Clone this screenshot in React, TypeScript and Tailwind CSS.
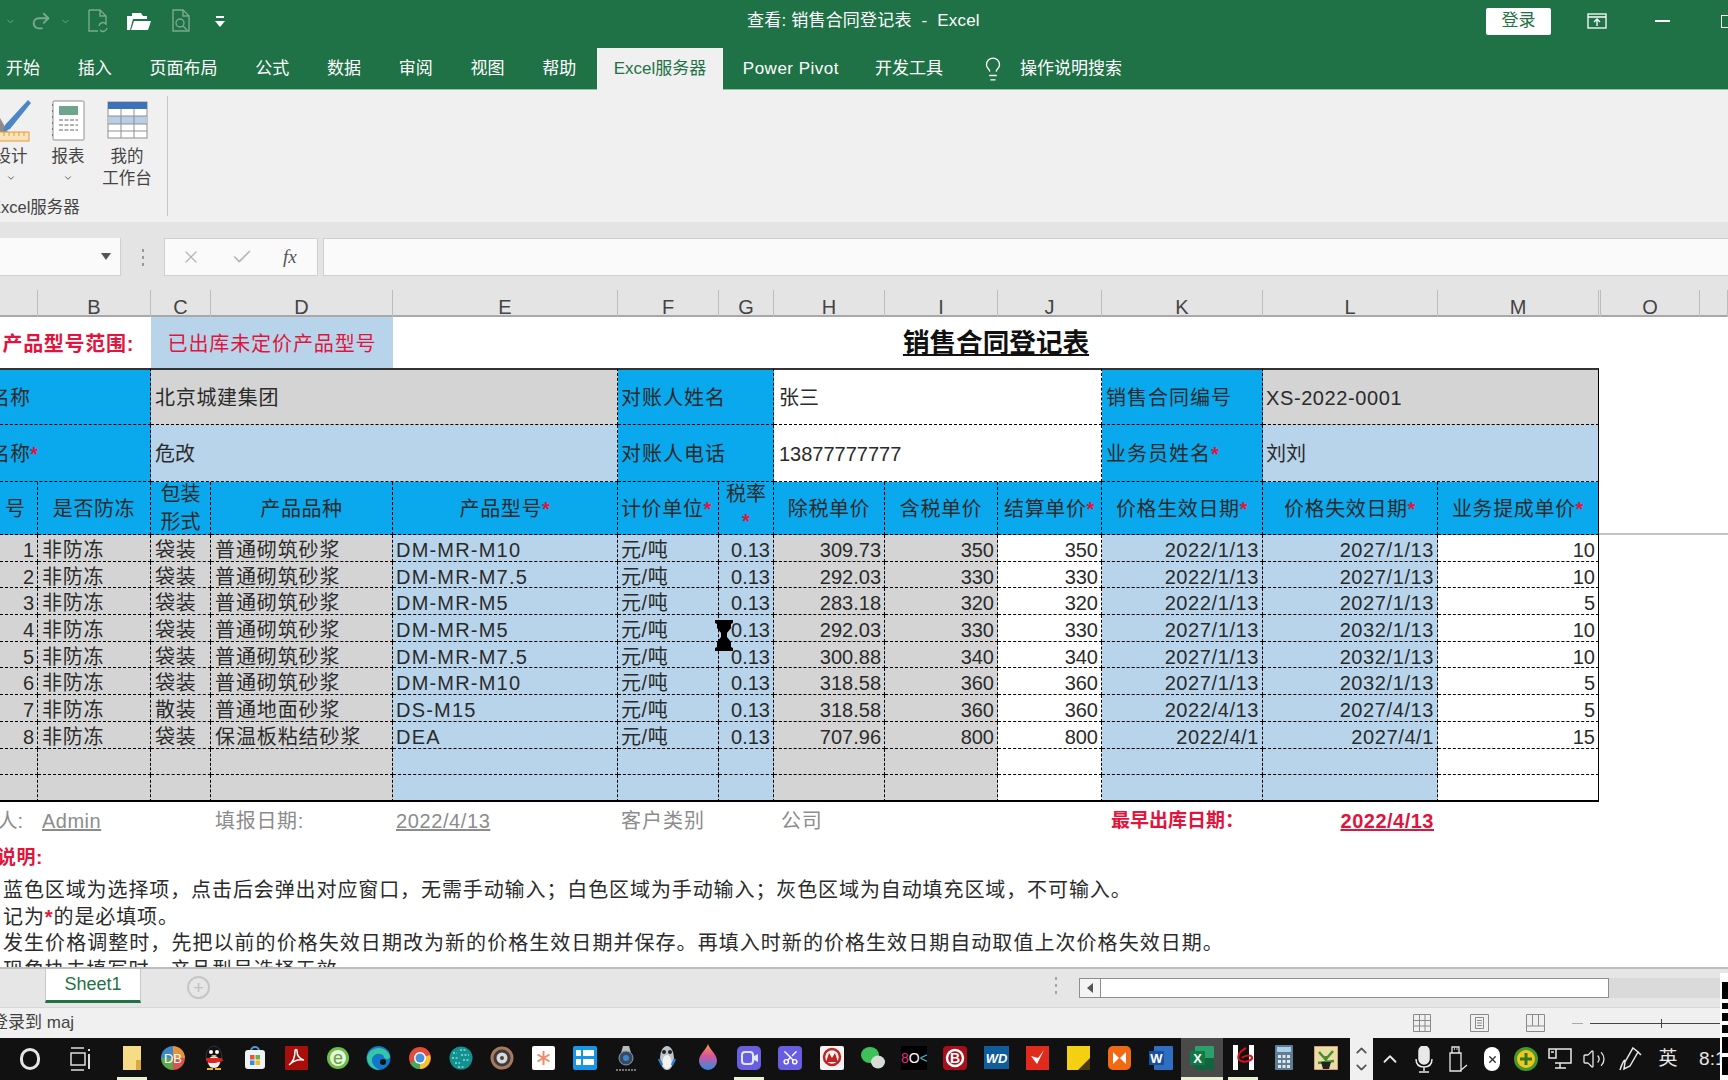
import React from 'react';
import { Lightbulb, Redo2, Scissors, Volume2, ChevronUp, ChevronDown, X, Check } from 'lucide-react';

const COLS = "grid-cols-[38px_113px_60px_182px_225px_101px_55px_111px_113px_104px_161px_175px_161px_2px_99px_28px]";
const LINE = "border-r border-b border-dashed border-[#000]";
const BRIGHT = "bg-[#0aa8ec]";
const LIGHT = "bg-[#b8d4ea]";
const GRAY = "bg-[#d4d4d4]";
const SOLID_R = "[border-right-style:solid]!";

const Star = () => <span className="text-[#e0143c] font-bold">*</span>;

const tabs = ['开始', '插入', '页面布局', '公式', '数据', '审阅', '视图', '帮助'];
const letters = ['', 'B', 'C', 'D', 'E', 'F', 'G', 'H', 'I', 'J', 'K', 'L', 'M', '', 'O', ''];

const rows = [
  ['1', '袋装', '普通砌筑砂浆', 'DM-MR-M10', '309.73', '350', '350', '2022/1/13', '2027/1/13', '10'],
  ['2', '袋装', '普通砌筑砂浆', 'DM-MR-M7.5', '292.03', '330', '330', '2022/1/13', '2027/1/13', '10'],
  ['3', '袋装', '普通砌筑砂浆', 'DM-MR-M5', '283.18', '320', '320', '2022/1/13', '2027/1/13', '5'],
  ['4', '袋装', '普通砌筑砂浆', 'DM-MR-M5', '292.03', '330', '330', '2027/1/13', '2032/1/13', '10'],
  ['5', '袋装', '普通砌筑砂浆', 'DM-MR-M7.5', '300.88', '340', '340', '2027/1/13', '2032/1/13', '10'],
  ['6', '袋装', '普通砌筑砂浆', 'DM-MR-M10', '318.58', '360', '360', '2027/1/13', '2032/1/13', '5'],
  ['7', '散装', '普通地面砂浆', 'DS-M15', '318.58', '360', '360', '2022/4/13', '2027/4/13', '5'],
  ['8', '袋装', '保温板粘结砂浆', 'DEA', '707.96', '800', '800', '2022/4/1', '2027/4/1', '15'],
  ['', '', '', '', '', '', '', '', '', ''],
  ['', '', '', '', '', '', '', '', '', ''],
];

function Cell({ className = '', children }: { className?: string; children?: React.ReactNode }) {
  return (
    <div className={`flex items-center overflow-hidden whitespace-nowrap ${LINE} ${className}`}>
      {children}
    </div>
  );
}

function DataRow({ row, last }: { row: string[]; last: boolean }) {
  const end = last ? 'border-b-2 [border-bottom-style:solid]!' : '';
  const unit = row[3] ? '元/吨' : '';
  const rate = row[3] ? '0.13' : '';
  const frost = row[3] ? '非防冻' : '';
  const num = `justify-end pr-[3px] pt-[4px]`;
  const txt = `pl-[4px] pt-[4px]`;
  return (
    <>
      <Cell className={`${GRAY} ${num} ${end}`}>{row[0]}</Cell>
      <Cell className={`${GRAY} ${txt} tracking-[0.7px] ${end}`}>{frost}</Cell>
      <Cell className={`${GRAY} ${txt} tracking-[0.7px] ${end}`}>{row[1]}</Cell>
      <Cell className={`${GRAY} ${txt} tracking-[0.9px] ${end}`}>{row[2]}</Cell>
      <Cell className={`${LIGHT} pl-[3px] pt-[4px] tracking-[1.2px] ${end}`}>{row[3]}</Cell>
      <Cell className={`${LIGHT} pl-[3px] pt-[4px] tracking-[0.6px] ${end}`}>{unit}</Cell>
      <Cell className={`${LIGHT} ${num} ${end}`}>{rate}</Cell>
      <Cell className={`${GRAY} ${num} ${end}`}>{row[4]}</Cell>
      <Cell className={`${GRAY} ${num} ${end}`}>{row[5]}</Cell>
      <Cell className={`bg-white ${num} ${end}`}>{row[6]}</Cell>
      <Cell className={`${LIGHT} ${num} tracking-[0.6px] ${end}`}>{row[7]}</Cell>
      <Cell className={`${LIGHT} ${num} tracking-[0.6px] ${end}`}>{row[8]}</Cell>
      <Cell className={`bg-white ${num} ${SOLID_R} ${end}`}>{row[9]}</Cell>
      <div className="col-span-3" />
    </>
  );
}

function TitleBar() {
  return (
    <div className="flex h-[48px] items-center pb-[6px] bg-[#1f7246] text-white shrink-0">
      <div className="flex w-[747px] items-center shrink-0">
        <ChevronDown size={11} className="ml-[5px] opacity-40" />
        <Redo2 size={22} className="ml-[14px] opacity-40" />
        <ChevronDown size={11} className="ml-[8px] opacity-40" />
        <svg width="22" height="24" viewBox="0 0 22 24" fill="none" stroke="#fff" strokeWidth="1.4" className="ml-[16px] opacity-40">
          <path d="M2 1h11l6 6v9M2 1v21h9M13 1v6h6" />
          <path d="M12 17a4 4 0 0 1 7-2M20 19a4 4 0 0 1-7 2" />
        </svg>
        <svg width="26" height="20" viewBox="0 0 26 20" fill="#fff" className="ml-[17px]">
          <path d="M1 19V5h5V2h9l2 3h4v3H7L4 19zM8 10h17l-3 9H5z" />
        </svg>
        <svg width="20" height="24" viewBox="0 0 20 24" fill="none" stroke="#fff" strokeWidth="1.4" className="ml-[19px] opacity-40">
          <path d="M2 1h10l6 6v15H2zM12 1v6h6" />
          <circle cx="9" cy="14" r="4" />
          <path d="M12 17l4 4" />
        </svg>
        <svg width="10" height="11" viewBox="0 0 10 11" fill="#fff" className="ml-[24px]">
          <rect x="1" y="0" width="8" height="2" />
          <path d="M0 5h10l-5 6z" />
        </svg>
      </div>
      <div className="w-[739px] shrink-0 text-[17px] tracking-[0.2px] whitespace-pre">查看: 销售合同登记表  -  Excel</div>
      <div className="w-[65px] h-[27px] shrink-0 bg-white rounded-[2px] flex items-center justify-center text-[#1f7246] text-[17px]">登录</div>
      <svg width="20" height="16" viewBox="0 0 20 16" fill="none" stroke="#fff" strokeWidth="1.3" className="ml-[36px] shrink-0">
        <rect x="1" y="1" width="18" height="14" />
        <path d="M1 4h18M10 13V7M7 9l3-3 3 3" />
      </svg>
      <div className="ml-[48px] w-[15px] h-[2px] bg-white shrink-0" />
      <div className="ml-[51px] w-[14px] h-[13px] border border-white shrink-0" />
    </div>
  );
}

function TabsRow() {
  return (
    <div className="flex h-[42px] -ml-[13px] items-stretch bg-[#1f7246] text-white text-[17px] border-b border-[#8fc4a4] shrink-0">
      {tabs.map((t) => (
        <div key={t} className="flex items-center px-[18.9px]">{t}</div>
      ))}
      <div className="flex items-center px-[16.5px] ml-[2px] -mb-px bg-[#f0f0f0] text-[#1f7246]">Excel服务器</div>
      <div className="flex items-center px-[18px] ml-[2px] tracking-[0.5px]">Power Pivot</div>
      <div className="flex items-center px-[18px]">开发工具</div>
      <div className="flex items-center ml-[19px]">
        <Lightbulb size={26} strokeWidth={1.2} />
        <span className="ml-[14px]">操作说明搜索</span>
      </div>
    </div>
  );
}

function Ribbon() {
  return (
    <div className="flex h-[132px] bg-[#f0f0f0] text-[#444] text-[16.5px] leading-[22px] shrink-0">
      <div className="flex flex-col w-[167px] pt-[10px]">
        <div className="flex h-[89px]">
          <div className="flex flex-col items-center w-[42px] -ml-[10px] shrink-0">
            <svg width="42" height="45" viewBox="0 0 42 45">
              <path d="M10 18l8 14H2z" fill="#8c8c8c" />
              <path d="M38 0l3 3-21 26-7 3 2-7z" fill="#4c86c6" />
              <rect x="2" y="32" width="37" height="9" fill="#fbe3b8" stroke="#e29b3c" />
              <path d="M9 32v4M14 32v4M19 32v4M24 32v4M29 32v4M34 32v4" stroke="#e29b3c" />
            </svg>
            <span>设计</span>
            <div className="flex items-center h-[22px]"><ChevronDown size={10} /></div>
          </div>
          <div className="flex flex-col items-center w-[36px] ml-[18px] shrink-0">
            <svg width="34" height="45" viewBox="0 0 34 45">
              <rect x="2" y="1" width="31" height="39" rx="1" fill="#fff" stroke="#8f8f8f" />
              <path d="M2 5h-1M2 11h-1M2 17h-1M2 23h-1M2 29h-1M2 35h-1" stroke="#777" strokeWidth="2" />
              <rect x="8" y="6" width="19" height="9" fill="#6fa58b" />
              <path d="M8 20h19M8 25h19M8 30h19" stroke="#999" strokeWidth="1.4" strokeDasharray="4 1.5" />
            </svg>
            <span>报表</span>
            <div className="flex items-center h-[22px]"><ChevronDown size={10} /></div>
          </div>
          <div className="flex flex-col items-center w-[50px] ml-[16px] shrink-0">
            <svg width="41" height="45" viewBox="0 0 41 45">
              <rect x="1" y="2" width="39" height="36" fill="#fff" stroke="#8f8f8f" />
              <rect x="1" y="2" width="39" height="7" fill="#3f72b5" />
              <rect x="2" y="16" width="37" height="8" fill="#b9cde6" />
              <path d="M1 16h39M1 24h39M1 31h39M14 9v29M27 9v29" stroke="#8f8f8f" />
            </svg>
            <span>我的</span>
            <span>工作台</span>
          </div>
        </div>
        <div className="-ml-[10px] mt-[7px] whitespace-nowrap">Excel服务器</div>
      </div>
      <div className="w-px h-[120px] mt-[6px] bg-[#c6c6c6]" />
    </div>
  );
}

function FormulaBar() {
  return (
    <div className="flex h-[54px] pt-[16px] bg-[#e4e4e4] shrink-0">
      <div className="flex items-center justify-end w-[121px] pr-[9px] bg-[#fafafa] border-r border-b border-[#d0d0d0]">
        <svg width="10" height="7" viewBox="0 0 10 7" fill="#555"><path d="M0 0h10L5 7z" /></svg>
      </div>
      <div className="flex flex-col items-center justify-center gap-[4px] w-[43px]">
        <div className="w-[2px] h-[3px] bg-[#999]" />
        <div className="w-[2px] h-[3px] bg-[#999]" />
        <div className="w-[2px] h-[3px] bg-[#999]" />
      </div>
      <div className="flex items-center w-[154px] bg-[#fafafa] border border-[#d0d0d0] text-[#555]">
        <X size={20} strokeWidth={1.6} className="ml-[16px] text-[#b5b5b5]" />
        <Check size={22} strokeWidth={1.8} className="ml-[30px] text-[#b5b5b5]" />
        <span className="ml-[30px] text-[19px] italic font-['Liberation_Serif',serif]">fx</span>
      </div>
      <div className="flex-1 ml-[5px] bg-[#fafafa] border-t border-b border-l border-[#cfcfcf]" />
    </div>
  );
}

function ColumnHeader() {
  return (
    <div className={`grid ${COLS} h-[41px] pt-[14px] bg-[#e4e4e4] border-b-2 border-[#a8a8a8] text-[20px] text-[#444] shrink-0`}>
      {letters.map((l, i) => (
        <div key={i} className="flex items-center justify-center pt-[2px] border-r border-[#bdbdbd]">{l}</div>
      ))}
    </div>
  );
}

function Sheet() {
  const solidTop = "border-t-2 border-t-[#333] [border-top-style:solid]!";
  return (
    <div className="relative h-[650px] overflow-hidden bg-white text-[20px] text-[#2b2b2b] shrink-0">
      <div className={`grid ${COLS} grid-rows-[51px_57px_57px_53px_repeat(10,26.7px)_38px]`}>
        {/* title row */}
        <div className="col-span-2 flex items-center justify-end pr-[17px] pt-[2px] text-[#e0143c] font-bold tracking-[0.7px] whitespace-nowrap overflow-hidden">产品型号范围:</div>
        <div className={`col-span-2 flex items-center justify-center pt-[2px] ${LIGHT} text-[#e0143c] tracking-[0.9px] whitespace-nowrap`}>已出库未定价产品型号</div>
        <div className="col-span-9 flex items-center justify-center text-[26.6px] font-bold underline text-[#111] pt-[3px]">销售合同登记表</div>
        <div className="col-span-3" />

        {/* customer rows */}
        <Cell className={`col-span-2 pt-[2px] ${BRIGHT} ${solidTop} -indent-[10px]`}>名称</Cell>
        <Cell className={`col-span-3 pt-[2px] ${GRAY} ${solidTop} pl-[4px] tracking-[0.7px]`}>北京城建集团</Cell>
        <Cell className={`col-span-2 pt-[2px] ${BRIGHT} ${solidTop} pl-[3px] tracking-[1px]`}>对账人姓名</Cell>
        <Cell className={`col-span-3 pt-[2px] bg-white ${solidTop} pl-[5px]`}>张三</Cell>
        <Cell className={`pt-[2px] ${BRIGHT} ${solidTop} pl-[4px] tracking-[1px]`}>销售合同编号</Cell>
        <Cell className={`col-span-2 pt-[2px] ${GRAY} ${solidTop} pl-[3px] tracking-[0.6px] ${SOLID_R}`}>XS-2022-0001</Cell>
        <div className="col-span-3" />

        <Cell className={`col-span-2 pt-[2px] ${BRIGHT} -indent-[10px]`}><span>名称<Star /></span></Cell>
        <Cell className={`col-span-3 pt-[2px] ${LIGHT} pl-[4px]`}>危改</Cell>
        <Cell className={`col-span-2 pt-[2px] ${BRIGHT} pl-[3px] tracking-[1px]`}>对账人电话</Cell>
        <Cell className="col-span-3 pt-[2px] bg-white pl-[5px]">13877777777</Cell>
        <Cell className={`pt-[2px] ${BRIGHT} pl-[4px] tracking-[1px]`}><span>业务员姓名<Star /></span></Cell>
        <Cell className={`col-span-2 pt-[2px] ${LIGHT} pl-[3px] ${SOLID_R}`}>刘刘</Cell>
        <div className="col-span-3" />

        {/* header row */}
        <Cell className={`${BRIGHT} justify-end pr-[12px] pt-[2px]`}>号</Cell>
        <Cell className={`${BRIGHT} justify-center pt-[2px] tracking-[0.6px]`}>是否防冻</Cell>
        <Cell className={`${BRIGHT} justify-center text-center leading-[28px] whitespace-normal!`}>包装<br />形式</Cell>
        <Cell className={`${BRIGHT} justify-center pt-[2px] tracking-[0.6px]`}>产品品种</Cell>
        <Cell className={`${BRIGHT} justify-center pt-[2px] tracking-[0.6px]`}><span>产品型号<Star /></span></Cell>
        <Cell className={`${BRIGHT} pl-[3px] pt-[2px] tracking-[0.6px]`}><span>计价单位<Star /></span></Cell>
        <Cell className={`${BRIGHT} justify-center text-center leading-[27px] whitespace-normal!`}><span>税率<br /><Star /></span></Cell>
        <Cell className={`${BRIGHT} justify-center pt-[2px] tracking-[0.6px]`}>除税单价</Cell>
        <Cell className={`${BRIGHT} justify-center pt-[2px] tracking-[0.6px]`}>含税单价</Cell>
        <Cell className={`${BRIGHT} justify-center pt-[2px] tracking-[0.6px]`}><span>结算单价<Star /></span></Cell>
        <Cell className={`${BRIGHT} justify-center pt-[2px] tracking-[0.6px]`}><span>价格生效日期<Star /></span></Cell>
        <Cell className={`${BRIGHT} justify-center pt-[2px] tracking-[0.6px]`}><span>价格失效日期<Star /></span></Cell>
        <Cell className={`${BRIGHT} justify-center pt-[2px] tracking-[0.6px] ${SOLID_R}`}><span>业务提成单价<Star /></span></Cell>
        <div className="col-span-3 border-b-2 border-[#c4c4c4]" />

        {rows.map((r, i) => (
          <DataRow key={i} row={r} last={i === rows.length - 1} />
        ))}

        {/* info row */}
        <div className="flex items-center justify-end text-[#8c8c8c] whitespace-nowrap pr-[15px]">人:</div>
        <div className="flex items-center pl-[4px] text-[#8c8c8c] underline tracking-[0.5px]">Admin</div>
        <div />
        <div className="flex items-center pl-[4px] text-[#8c8c8c] tracking-[0.7px]">填报日期:</div>
        <div className="flex items-center pl-[3px] text-[#8c8c8c] underline tracking-[0.6px]">2022/4/13</div>
        <div className="flex items-center pl-[3px] text-[#8c8c8c] tracking-[1px] whitespace-nowrap">客户类别</div>
        <div />
        <div className="col-span-3 flex items-center pl-[7px] text-[#8c8c8c] tracking-[0.7px]">公司</div>
        <div className="flex items-center pl-[9px] text-[#e0143c] font-bold text-[19px] whitespace-nowrap">最早出库日期：</div>
        <div className="flex items-center justify-end pr-[4px] text-[#e0143c] font-bold underline tracking-[0.5px]">2022/4/13</div>
        <div className="col-span-4" />
      </div>

      <div className="flex h-[37px] items-center -ml-[3px] text-[#e0143c] font-bold text-[19px] tracking-[0.5px]">说明:</div>
      <div className="pl-[3px] tracking-[0.9px] leading-[26.7px] whitespace-nowrap">
        <div>蓝色区域为选择项，点击后会弹出对应窗口，无需手动输入；白色区域为手动输入；灰色区域为自动填充区域，不可输入。</div>
        <div>记为<Star />的是必填项。</div>
        <div className="tracking-[1.05px]">发生价格调整时，先把以前的价格失效日期改为新的价格生效日期并保存。再填入时新的价格生效日期自动取值上次价格失效日期。</div>
        <div>现角协未填写时，产品型号选择无效。</div>
      </div>

      {/* busy cursor over cell G */}
      <svg width="18" height="31" viewBox="0 0 18 31" className="absolute left-[715px] top-[303px]">
        <path d="M0 0h18v3l-2 1v4l-4 5v4l4 5v5l2 1v3H0v-3l2-1v-5l4-5v-4L2 8V4L0 3z" fill="#000" />
      </svg>
    </div>
  );
}

function SheetTabs() {
  return (
    <div className="flex h-[40px] items-start bg-[#e6e6e6] border-t-2 border-[#bdbdbd] shrink-0">
      <div className="flex items-center justify-center ml-[45px] w-[96px] h-[34px] bg-white border-x border-[#c8c8c8] border-b-[3px] border-b-[#1f7246] text-[#1f7246] text-[18px]">Sheet1</div>
      <div className="flex items-center justify-center ml-[46px] mt-[7px] w-[23px] h-[23px] rounded-full border-2 border-[#c6c6c6] text-[#c0c0c0] text-[18px] leading-none">+</div>
      <div className="ml-[845px] mt-[8px] flex flex-col gap-[4px]">
        <div className="w-[2px] h-[3px] bg-[#a5a5a5]" />
        <div className="w-[2px] h-[3px] bg-[#a5a5a5]" />
        <div className="w-[2px] h-[3px] bg-[#a5a5a5]" />
      </div>
      <div className="flex ml-[22px] mt-[9px] h-[20px] w-[530px] bg-white border border-[#8f8f8f]">
        <div className="flex items-center justify-center w-[21px] border-r border-[#8f8f8f] bg-[#f4f4f4]">
          <svg width="6" height="10" viewBox="0 0 6 10" fill="#555"><path d="M6 0v10L0 5z" /></svg>
        </div>
      </div>
      <div className="flex-1 mt-[9px] h-[20px] bg-[#dadada]" />
    </div>
  );
}

function StatusBar() {
  return (
    <div className="flex h-[31px] items-center bg-[#f0f0f0] border-t border-[#d6d6d6] text-[#444] text-[17px] shrink-0">
      <div className="-ml-[9px] w-[1422px] whitespace-nowrap">登录到 maj</div>
      <svg width="18" height="18" viewBox="0 0 18 18" fill="none" stroke="#8a8a8a"><path d="M.5.5h17v17H.5zM6.5.5v17M12 .5v17M.5 6.5h17M.5 12h17" /></svg>
      <svg width="19" height="18" viewBox="0 0 19 18" fill="none" stroke="#8a8a8a" className="ml-[39px]"><path d="M.5.5h18v17H.5zM5.5 3.5h8v11h-8zM7 6.500h5M7 9h5M7 11.500h5" /></svg>
      <svg width="19" height="18" viewBox="0 0 19 18" fill="none" stroke="#8a8a8a" className="ml-[37px]"><path d="M.5.5h18v17H.5zM.5 12h18M6.500.5V12M12.500.5V12" /></svg>
      <div className="ml-[27px] w-[11px] h-px bg-[#a8a8a8]" />
      <div className="relative ml-[7px] flex-1 h-px bg-[#444]">
        <div className="absolute left-[71px] -top-[4px] w-px h-[9px] bg-[#444]" />
      </div>
    </div>
  );
}

type TaskIcon = { svg: React.ReactNode; strip?: boolean; active?: boolean };

const taskIcons: TaskIcon[] = [
  { strip: true, svg: <svg width="20" height="24" viewBox="0 0 20 24"><rect x="1" y="0" width="18" height="24" fill="#f6dc85" /><rect x="14" y="14" width="5" height="10" fill="#d9a93f" /></svg> },
  { svg: <svg width="24" height="26" viewBox="0 0 24 26"><path d="M12 13V1a12 12 0 0 1 12 12z" fill="#e8913a" /><path d="M12 13h12a12 12 0 0 1-12 12z" fill="#d9534f" /><path d="M12 13v12A12 12 0 0 1 0 13z" fill="#5ba84a" /><path d="M12 13H0A12 12 0 0 1 12 1z" fill="#3f86c9" /><text x="12" y="18" textAnchor="middle" fontSize="13" fill="#fff" fontFamily="Liberation Sans">DB</text></svg> },
  { svg: <svg width="22" height="26" viewBox="0 0 22 26"><ellipse cx="11" cy="12" rx="8" ry="11" fill="#111" stroke="#333" /><ellipse cx="11" cy="17" rx="6" ry="6" fill="#eee" /><circle cx="8" cy="7" r="2" fill="#fff" /><circle cx="14" cy="7" r="2" fill="#fff" /><path d="M8 10h6l-3 2z" fill="#f0b323" /><path d="M3 13h16l1 3-8 2H6l-3-3z" fill="#d22" /><path d="M4 23h6v2H4zM12 23h6v2h-6z" fill="#f0b323" /></svg> },
  { svg: <svg width="22" height="25" viewBox="0 0 22 25"><path d="M7 6a4 4 0 0 1 8 0" fill="none" stroke="#4c9bd6" strokeWidth="2" /><rect x="1" y="5" width="20" height="19" rx="3" fill="#eef3f6" /><rect x="6" y="10" width="4.500" height="4.500" fill="#e8553a" /><rect x="11.500" y="10" width="4.500" height="4.500" fill="#6cb33f" /><rect x="6" y="15.500" width="4.500" height="4.500" fill="#2f8fdc" /><rect x="11.500" y="15.500" width="4.500" height="4.500" fill="#f5b921" /></svg> },
  { svg: <svg width="23" height="24" viewBox="0 0 23 24"><rect width="23" height="24" rx="1" fill="#a80f0a" /><path d="M4 19c4-3 6-9 6-14 0-2 2-2 2 0 0 5 3 8 7 9-5-1-11 1-15 5z" fill="none" stroke="#fff" strokeWidth="1.500" /></svg> },
  { svg: <svg width="22" height="26" viewBox="0 0 22 26"><circle cx="11" cy="13" r="11" fill="#6cbe45" /><circle cx="11" cy="13" r="8" fill="#e9f5de" /><text x="11" y="19" textAnchor="middle" fontSize="18" fill="#5aa838" fontFamily="Liberation Sans">e</text></svg> },
  { svg: <svg width="25" height="26" viewBox="0 0 25 26"><circle cx="12.500" cy="13" r="12" fill="#0f78c9" /><path d="M1 12A12 12 0 0 1 24 11c0 4-5 4-6 1-1-4-10-5-12 2-1 5 4 9 8 11C7 25 1 20 1 12z" fill="#37c5a6" /><circle cx="17" cy="17" r="3" fill="#111" /></svg> },
  { svg: <svg width="24" height="26" viewBox="0 0 24 26"><circle cx="12" cy="13" r="11" fill="#e04b3a" /><path d="M12 13L2 18a11 11 0 0 0 10 6z" fill="#4aa85a" /><path d="M12 13v11a11 11 0 0 0 10-14z" fill="#f4c430" /><circle cx="12" cy="13" r="6" fill="#fff" /><circle cx="12" cy="13" r="4.500" fill="#4a8fdc" /></svg> },
  { svg: <svg width="24" height="26" viewBox="0 0 24 26"><circle cx="12" cy="13" r="11.500" fill="#14908f" /><path d="M4 8h4M11 5h6M3 13h6M12 10h8M6 18h5M14 15h6M9 22h7" stroke="#7ee3dc" strokeWidth="1.500" strokeDasharray="2 1.500" /></svg> },
  { svg: <svg width="24" height="26" viewBox="0 0 24 26"><circle cx="12" cy="13" r="10" fill="#3b3b3b" stroke="#a8795f" strokeWidth="3" /><circle cx="12" cy="13" r="5.500" fill="#d9d9d9" /><circle cx="12" cy="13" r="2" fill="#444" /></svg> },
  { svg: <svg width="23" height="26" viewBox="0 0 23 26"><rect y="1" width="23" height="24" rx="2" fill="#fff" /><path d="M11.500 6v14M5.500 9.500l12 7M17.500 9.500l-12 7" stroke="#f08a6c" strokeWidth="2" /></svg> },
  { svg: <svg width="24" height="26" viewBox="0 0 24 26"><rect y="1" width="24" height="24" rx="2" fill="#1596e8" /><rect x="3" y="5" width="5" height="6" fill="#fff" /><rect x="3" y="14" width="5" height="6" fill="#fff" /><rect x="10" y="5" width="11" height="6" fill="#fff" /><rect x="10" y="14" width="11" height="6" fill="#fff" /></svg> },
  { svg: <svg width="24" height="26" viewBox="0 0 24 26"><path d="M9 1h6l2 7H7z" fill="#bbb" /><circle cx="12" cy="13" r="7" fill="#334b66" stroke="#999" /><circle cx="12" cy="13" r="3" fill="#3f86c9" /><path d="M2 25h20" stroke="#777" strokeWidth="2" strokeDasharray="2 1" /></svg> },
  { svg: <svg width="22" height="26" viewBox="0 0 22 26"><ellipse cx="11" cy="13" rx="7" ry="12" fill="#bcc4cc" /><ellipse cx="11" cy="17" rx="4.500" ry="7" fill="#f1f1f1" /><circle cx="8" cy="7" r="2" fill="#222" /><circle cx="14" cy="7" r="2" fill="#222" /><path d="M3 14l3 6M19 14l-3 6" stroke="#2f7fc8" strokeWidth="2.500" /></svg> },
  { svg: <svg width="20" height="27" viewBox="0 0 20 27"><defs><linearGradient id="dropG" x1="0" y1="0" x2="0" y2="1"><stop offset="0" stopColor="#f2a03d" /><stop offset="0.45" stopColor="#d9549e" /><stop offset="1" stopColor="#2f8de0" /></linearGradient></defs><path d="M10 0c2 6 9 10 9 17a9 9 0 0 1-18 0C1 10 8 6 10 0z" fill="url(#dropG)" /></svg> },
  { strip: true, svg: <svg width="24" height="26" viewBox="0 0 24 26"><rect y="1" width="24" height="24" rx="5" fill="#6a5ee0" /><rect x="5" y="7" width="11" height="12" rx="3" fill="none" stroke="#dfe6ff" strokeWidth="2" /><path d="M17 11l4-2v8l-4-2z" fill="#dfe6ff" /></svg> },
  { svg: <div className="flex items-center justify-center w-[24px] h-[24px] rounded-[4px] bg-[#6a5ee0] text-white"><Scissors size={17} className="-rotate-90" /></div> },
  { svg: <svg width="24" height="26" viewBox="0 0 24 26"><rect y="1" width="24" height="24" rx="2" fill="#f3f3f3" /><circle cx="12" cy="12" r="8" fill="none" stroke="#c22424" strokeWidth="2.500" /><path d="M6 17l3-9 3 5 3-5 3 9z" fill="#c22424" /></svg> },
  { svg: <svg width="26" height="26" viewBox="0 0 26 26"><ellipse cx="10" cy="10" rx="9" ry="8" fill="#3fc15a" /><ellipse cx="18" cy="17" rx="7" ry="6.500" fill="#d6dcd6" /></svg> },
  { svg: <div className="flex items-center w-[26px] h-[24px] text-[14px] leading-none bg-black overflow-hidden"><span className="text-[#e0337a]">8</span><span className="text-white">O</span><span className="text-[#3fb6d6]">&lt;</span></div> },
  { svg: <svg width="24" height="26" viewBox="0 0 24 26"><rect y="1" width="24" height="24" rx="4" fill="#a80f1a" /><circle cx="12" cy="13" r="8" fill="none" stroke="#fff" strokeWidth="2.500" /><text x="12" y="18" textAnchor="middle" fontSize="14" fontWeight="700" fill="#fff" fontFamily="Liberation Sans">B</text></svg> },
  { svg: <svg width="25" height="25" viewBox="0 0 25 25"><rect y="1" width="25" height="23" fill="#0f5d9c" /><text x="12.500" y="18" textAnchor="middle" fontSize="13" fontWeight="700" fontStyle="italic" fill="#fff" fontFamily="Liberation Sans">WD</text></svg> },
  { svg: <svg width="23" height="26" viewBox="0 0 23 26"><rect y="1" width="23" height="24" fill="#e02a1c" /><path d="M5 11l6 8 7-14-6 8z" fill="#fff" /></svg> },
  { svg: <svg width="23" height="24" viewBox="0 0 23 24"><rect width="23" height="24" fill="#f5cf12" /><path d="M23 12v12H11z" fill="#4a3a10" /></svg> },
  { svg: <svg width="23" height="26" viewBox="0 0 23 26"><rect y="1" width="23" height="24" rx="5" fill="#ef6a12" /><path d="M5 7l6 6-6 6zM18 7l-6 6 6 6z" fill="#fff" /></svg> },
  { svg: <svg width="26" height="26" viewBox="0 0 26 26"><rect x="6" y="1" width="19" height="24" rx="1" fill="#2e6fc4" /><rect x="1" y="6" width="15" height="14" fill="#174f9e" /><text x="8.500" y="18" textAnchor="middle" fontSize="13" fontWeight="700" fill="#fff" fontFamily="Liberation Sans">W</text></svg> },
  { active: true, strip: true, svg: <svg width="26" height="26" viewBox="0 0 26 26"><rect x="6" y="1" width="19" height="24" rx="1" fill="#2ba06a" /><path d="M6 13h19v12H6z" fill="#14633f" /><rect x="1" y="6" width="15" height="14" fill="#0f7a45" /><text x="8.500" y="18" textAnchor="middle" fontSize="13" fontWeight="700" fill="#fff" fontFamily="Liberation Sans">X</text></svg> },
  { strip: true, svg: <svg width="23" height="27" viewBox="0 0 23 27"><rect width="23" height="27" fill="#111" /><rect x="1" y="1" width="5" height="25" fill="#fff" /><rect x="17" y="1" width="5" height="25" fill="#fff" /><path d="M14 4C6 8 4 15 9 17c5 2 12-1 11-4-1-2-7-2-10 1" fill="none" stroke="#d8101c" strokeWidth="2" /></svg> },
  { svg: <svg width="18" height="25" viewBox="0 0 18 25"><rect width="18" height="25" rx="1" fill="#607d92" /><rect x="2" y="2" width="14" height="5" fill="#a9d0ec" /><path d="M3 10h3v3H3zM7.500 10h3v3h-3zM12 10h3v3h-3zM3 15h3v3H3zM7.500 15h3v3h-3zM12 15h3v3h-3zM3 20h3v3H3zM7.500 20h3v3h-3zM12 20h3v3h-3z" fill="#dbe6ee" /></svg> },
  { svg: <svg width="24" height="24" viewBox="0 0 24 24"><rect width="24" height="24" fill="#e6e0a8" stroke="#d35a3c" /><path d="M12 22V10M12 14L5 6M12 13l7-8M12 16l-8 1M12 16l8-1" stroke="#4f8a2e" strokeWidth="2.500" /><path d="M7 16h10l-2 7H9z" fill="#222" /></svg> },
];

function Taskbar() {
  return (
    <div className="flex h-[42px] bg-[#111] text-[#ddd] shrink-0">
      <div className="flex items-center justify-center w-[60px]">
        <div className="w-[20px] h-[22px] rounded-full border-[3px] border-[#e6e6e6]" />
      </div>
      <div className="flex items-center justify-center w-[42px]">
        <svg width="22" height="26" viewBox="0 0 22 26" fill="none" stroke="#ddd" strokeWidth="1.500">
          <path d="M1 2h13M1 24h13M1 7h14v12H1z" />
          <path d="M19 3v2M19 8v15" strokeWidth="2" />
        </svg>
      </div>
      <div className="w-[9.400px]" />
      {taskIcons.map((t, i) => (
        <div key={i} className={`flex flex-col items-center w-[41.170px] shrink-0 ${t.active ? 'bg-[#4a4a4a]' : ''}`}>
          <div className="flex flex-1 items-center justify-center">{t.svg}</div>
          <div className={`h-[3px] w-[30px] ${t.strip ? 'bg-[#e8f2d0]' : ''} ${t.active ? 'w-full!' : ''}`} />
        </div>
      ))}
      <div className="flex flex-col items-center justify-center w-[23px] ml-[4px] bg-[#f0f0f0] text-[#555] shrink-0">
        <ChevronUp size={17} strokeWidth={2.500} />
        <ChevronDown size={17} strokeWidth={2.500} />
      </div>
      <div className="flex flex-1 items-center overflow-hidden text-[#e8e8e8]">
        <div className="flex justify-center w-[34px] shrink-0"><ChevronUp size={22} strokeWidth={2} /></div>
        <div className="flex justify-center w-[34px] shrink-0">
          <svg width="18" height="27" viewBox="0 0 18 27" fill="none" stroke="#e8e8e8" strokeWidth="1.500">
            <rect x="4" y="0" width="10" height="18" rx="5" fill="#e8e8e8" />
            <path d="M1 13c0 6 3 8 8 8s8-2 8-8M9 21v4M4 26h10" />
          </svg>
        </div>
        <div className="flex justify-center w-[34px] shrink-0">
          <svg width="20" height="27" viewBox="0 0 20 27" fill="none" stroke="#e8e8e8" strokeWidth="1.300">
            <path d="M4 1h7v6H4zM6 3h1M8.500 3h1M2 7h11v18H2zM12 25l7-6" />
          </svg>
        </div>
        <div className="flex justify-center w-[34px] shrink-0">
          <div className="flex items-center justify-center w-[16px] h-[24px] rounded-[8px] bg-white"><X size={11} strokeWidth={3} className="text-[#333]" /></div>
        </div>
        <div className="flex justify-center w-[34px] shrink-0">
          <svg width="24" height="24" viewBox="0 0 24 24"><circle cx="12" cy="12" r="12" fill="#3f9b2f" /><circle cx="12" cy="12" r="9" fill="#f5c51e" /><path d="M12 6v12M6 12h12" stroke="#2a7a22" strokeWidth="3" /></svg>
        </div>
        <div className="flex justify-center w-[34px] shrink-0">
          <svg width="24" height="22" viewBox="0 0 24 22" fill="none" stroke="#e8e8e8" strokeWidth="1.500"><path d="M7 1h16v14H7M12 15v5M7 20h11M1 1h7v9H1zM3 4h3" /></svg>
        </div>
        <div className="flex justify-center w-[34px] shrink-0"><Volume2 size={24} strokeWidth={1.300} /></div>
        <div className="flex justify-center w-[38px] shrink-0">
          <svg width="24" height="26" viewBox="0 0 24 26" fill="none" stroke="#e8e8e8" strokeWidth="1.500"><path d="M15 2l5 4-8 14-6 3 1-7zM2 24c2-6 3-9 5-10M20 6l3 3" /></svg>
        </div>
        <div className="flex justify-center w-[38px] shrink-0 text-[19px]">英</div>
        <div className="ml-[12px] text-[19px] whitespace-nowrap">8:17</div>
      </div>
    </div>
  );
}

export default function App() {
  return (
    <div className="relative flex flex-col w-[1728px] h-[1080px] overflow-hidden bg-white font-['Liberation_Sans','Noto_Sans_CJK_SC',sans-serif]">
      <TitleBar />
      <TabsRow />
      <Ribbon />
      <FormulaBar />
      <ColumnHeader />
      <Sheet />
      <SheetTabs />
      <StatusBar />
      <Taskbar />

      {/* strip of another window at the screen edge */}
      <div className="absolute right-0 top-[973px] bottom-0 w-[8px] flex flex-col gap-[4px] pl-[2px] pt-[9px] bg-white">
        <div className="h-[17px] bg-black" />
        <div className="h-[6px] bg-black" />
        <div className="h-[8px] bg-black" />
        <div className="h-[8px] bg-black" />
        <div className="h-[16px] bg-black" />
        <div className="h-[18px] bg-black" />
      </div>
    </div>
  );
}
